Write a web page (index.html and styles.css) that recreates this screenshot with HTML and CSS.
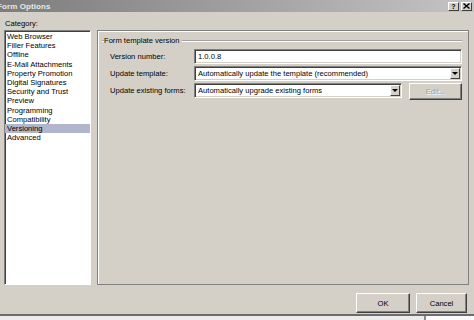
FILE: index.html
```html
<!DOCTYPE html>
<html>
<head>
<meta charset="utf-8">
<link rel="stylesheet" href="styles.css">
</head>
<body>
<div class="window">
  <div class="titlebar">
    <span class="title">Form Options</span>
    <div class="caption-btns">
      <span class="cbtn">?</span>
      <span class="cbtn cbtn-x">
        <svg width="7" height="6" viewBox="0 0 7 6"><path d="M0.5 0.5 L6.5 5.5 M6.5 0.5 L0.5 5.5" stroke="#000" stroke-width="1.4"/></svg>
      </span>
    </div>
  </div>
  <div class="content">
    <div class="cat-label">Category:</div>
    <div></div>
    <ul class="list">
      <li>Web Browser</li>
      <li>Filler Features</li>
      <li>Offline</li>
      <li>E-Mail Attachments</li>
      <li>Property Promotion</li>
      <li>Digital Signatures</li>
      <li>Security and Trust</li>
      <li>Preview</li>
      <li>Programming</li>
      <li>Compatibility</li>
      <li class="selected">Versioning</li>
      <li>Advanced</li>
    </ul>
    <div class="panel">
      <div class="group-head"><span class="seg"></span><span class="group-title">Form template version</span><span class="line"></span></div>
      <div class="form-grid">
        <div class="lbl">Version number:</div>
        <div class="field"><div class="textbox">1.0.0.8</div></div>
        <div class="lbl">Update template:</div>
        <div class="field"><div class="combo"><span class="combo-text">Automatically update the template (recommended)</span><span class="arrow"><span class="tri"></span></span></div></div>
        <div class="lbl">Update existing forms:</div>
        <div class="field field-row"><div class="combo combo-short"><span class="combo-text">Automatically upgrade existing forms</span><span class="arrow"><span class="tri"></span></span></div><div class="btn btn-disabled btn-edit">Edit...</div></div>
      </div>
    </div>
  </div>
  <div class="footer">
    <div class="btn btn-ok">OK</div>
    <div class="btn btn-cancel">Cancel</div>
  </div>
</div>
<div class="desk"><div class="desk-left"></div><div class="desk-line"></div><div class="desk-right"></div></div>
</body>
</html>
```
FILE: styles.css
```css
* { box-sizing: border-box; }
html, body { margin: 0; padding: 0; }
body {
  width: 474px;
  height: 320px;
  overflow: hidden;
  background: #f4f4f7;
  font-family: "Liberation Sans", Arial, sans-serif;
  font-size: 7.6px;
  color: #000;
}
.window {
  width: 474px;
  height: 316px;
  background: #d4d0c8;
  border-bottom: 2px solid #6c6c6c;
  display: flex;
  flex-direction: column;
}
.titlebar {
  height: 12px;
  background: linear-gradient(to right, #7c7c7c, #c4c4c4);
  display: flex;
  align-items: center;
  justify-content: space-between;
  flex: none;
}
.title {
  color: #e8e8e8;
  font-weight: bold;
  font-size: 8px;
  margin-left: -3px;
  letter-spacing: 0.1px;
}
.caption-btns {
  display: flex;
  gap: 2px;
  margin-right: 2px;
}
.cbtn {
  width: 11px;
  height: 9px;
  background: #d4d0c8;
  border: 1px solid;
  border-color: #fff #404040 #404040 #fff;
  font-size: 7px;
  font-weight: bold;
  line-height: 7px;
  text-align: center;
  display: flex;
  align-items: center;
  justify-content: center;
}
.content {
  display: grid;
  grid-template-columns: 87px 372px;
  grid-template-rows: 9px 255px;
  column-gap: 6px;
  row-gap: 2px;
  padding: 7px 5px 0 4px;
  flex: none;
}
.cat-label {
  line-height: 9px;
  padding-left: 1px;
}
.list {
  margin: 0;
  padding: 0;
  list-style: none;
  background: #fff;
  border: 1px solid;
  border-color: #808080 #fff #fff #808080;
  box-shadow: inset 1px 1px 0 #404040;
  padding: 1px 0 0 0;
}
.list li {
  line-height: 9.2px;
  height: 9.2px;
  padding-left: 2px;
  margin-left: 0;
  white-space: nowrap;
}
.list li.selected {
  background: #b2b6cc;
}
.panel {
  border: 1px solid #808080;
  box-shadow: inset 1px 1px 0 #fff;
  padding: 5px 6px 0 4px;
}
.group-head {
  display: flex;
  align-items: center;
  height: 9px;
  line-height: 9px;
}
.seg {
  width: 2px;
  height: 2px;
  border-top: 1px solid #a0a0a0;
  border-bottom: 1px solid #fff;
}
.group-title {
  padding: 0 2px 0 0;
  white-space: nowrap;
}
.line {
  flex: 1;
  height: 2px;
  border-top: 1px solid #a0a0a0;
  border-bottom: 1px solid #fff;
}
.form-grid {
  display: grid;
  grid-template-columns: 84px 1fr;
  grid-auto-rows: 15px;
  row-gap: 2px;
  margin-top: 4px;
  padding-left: 8px;
}
.lbl {
  line-height: 15px;
  white-space: nowrap;
}
.field-row {
  display: flex;
  gap: 7px;
}
.textbox, .combo {
  height: 15px;
  background: #fff;
  border: 1px solid;
  border-color: #808080 #fff #fff #808080;
  box-shadow: inset 1px 1px 0 #404040, inset -1px -1px 0 #d4d0c8;
  padding-left: 3px;
  line-height: 13px;
  white-space: nowrap;
  overflow: hidden;
}
.combo {
  display: flex;
  justify-content: space-between;
  padding-right: 1px;
}
.combo-text { overflow: hidden; }
.combo-short { width: 208px; flex: none; }
.arrow {
  width: 10px;
  height: 11px;
  margin-top: 1px;
  background: #d4d0c8;
  border: 1px solid;
  border-color: #fff #404040 #404040 #fff;
  display: flex;
  align-items: center;
  justify-content: center;
  flex: none;
}
.tri {
  width: 0;
  height: 0;
  border-left: 3px solid transparent;
  border-right: 3px solid transparent;
  border-top: 3px solid #000;
}
.btn {
  background: #d4d0c8;
  border: 1px solid;
  border-color: #fff #404040 #404040 #fff;
  box-shadow: inset -1px -1px 0 #808080;
  display: flex;
  align-items: center;
  justify-content: center;
}
.btn-edit {
  flex: 1;
  height: 17px;
}
.btn-disabled {
  color: #a0a0a0;
  text-shadow: 1px 1px 0 #fff;
}
.footer {
  display: flex;
  justify-content: flex-end;
  gap: 6px;
  padding: 8px 7px 0 0;
}
.btn-ok { width: 54px; height: 20px; }
.btn-cancel { width: 51px; height: 20px; }
.desk {
  height: 4px;
  display: flex;
}
.desk-left { width: 424px; background: #ececec; }
.desk-line { width: 2px; background: #8a8a8a; }
.desk-right { flex: 1; background: #fbfbfd; }
```
